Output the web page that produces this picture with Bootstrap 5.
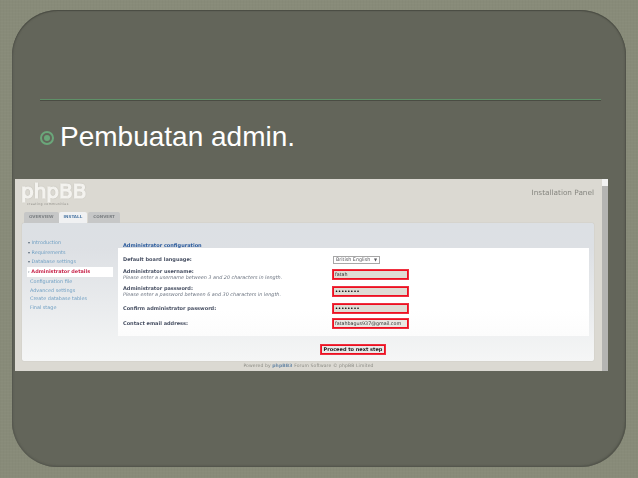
<!DOCTYPE html>
<html lang="id">
<head>
<meta charset="utf-8">
<title>Pembuatan admin</title>
<link href="https://cdn.jsdelivr.net/npm/bootstrap@5.3.0/dist/css/bootstrap.min.css" rel="stylesheet">
<script src="https://cdn.jsdelivr.net/npm/bootstrap@5.3.0/dist/js/bootstrap.bundle.min.js"></script>
<style>
html,body{margin:0;width:638px;height:478px;overflow:hidden}
.slide-bg{width:638px;height:478px;padding:10px 12px 11px 12px;background-color:#888b79;background-image:repeating-linear-gradient(0deg,rgba(255,255,255,.015) 0 1px,transparent 1px 3px),repeating-linear-gradient(90deg,rgba(0,0,0,.015) 0 1px,transparent 1px 3px)}
.slide-panel{height:457px;border-radius:46px;background:#63655a;box-shadow:inset 0 1px 1px #4a4c43,inset 1px 0 2px #565850,inset -1px -1px 2px #505249;padding-top:89px;overflow:hidden}
.rule-line{height:1px;margin:0 25px 0 28px;background:#5f9068;box-shadow:0 1px 0 #4a4c43}
.title-row{margin:19px 0 0 28px;height:36px;gap:6px}
.ring-dot{width:14px;height:14px;border-radius:50%;border:2px solid #6aa77a;padding:2px;margin-top:1px}
.ring-dot i{display:block;width:6px;height:6px;border-radius:50%;background:#6aa77a}
.title-text{font:28px/36px "Liberation Sans",sans-serif;color:#fff}
.shot{margin:24px 0 0 3px;width:593px;height:192px;background:#dbd9d2;font-family:"DejaVu Sans",sans-serif;filter:blur(.35px)}
.shot-main{width:587px}
.shot-head{height:33px;padding:2px 8px 0 6px}
.logo-box{line-height:1}
.logo-word{font:400 20px/20px "DejaVu Sans",sans-serif;color:#f4f3ef;-webkit-text-stroke:1.2px #f4f3ef;text-shadow:0 0 1.5px #85847c}
.logo-sub{font-size:3.2px;line-height:4px;color:#8f8e88;padding:1px 0 0 6px;letter-spacing:.35px}
.panel-name{font-size:7.3px;color:#85857f;margin-top:7px}
.tab-row{margin-left:9px;height:11px;gap:0}
.tab-item{font-size:4.1px;line-height:10px;font-weight:700;padding:0 5px;background:#c6c7c7;color:#7b7f82;border-radius:2px 2px 0 0}
.tab-item.on{background:#f0f1f2;color:#4f7aa6;height:11px;position:relative;z-index:1;margin-right:1px}
.inner-panel{margin-left:7px;width:572px;height:138px;background:linear-gradient(#dce0e4,#dde0e4 18%,#f5f6f6);border-radius:2px;box-shadow:0 0 1px #a9a9a3}
.side-col{width:96px;padding:15px 5px 0 5px}
.side-item{font-size:4.9px;line-height:8.7px;color:#6f9fc3;padding-left:1px;white-space:nowrap}
.side-item.on{background:#fff;color:#c8264c;font-weight:700;padding-left:1px}
.side-sub{padding-left:3px}
.side-mark{font-size:4px;color:#5d6e7e}
.main-col{width:471px;padding-top:19px}
.conf-title{font-size:5px;line-height:6px;font-weight:700;color:#2a5a9c;margin:0 0 0 5px}
.conf-card{height:88px;background:linear-gradient(#fff 70%,#fcfcfc);padding:5px 0 0 5px}
.form-line{display:grid;grid-template-columns:210px 1fr;align-items:center}
.line-a{height:13px}.line-b{height:17px}.line-c{height:13px}
.lab{font-size:5px;line-height:5.8px;font-weight:700;color:#474f62;white-space:nowrap}
.hint{font-size:4.9px;line-height:4.6px;font-style:italic;font-weight:400;color:#6c7480;white-space:nowrap}
.pick{width:47px;height:8px;border:1px solid #a7a7a7;background:#fff;font-size:4.8px;line-height:6px;color:#55555a;padding:0 2px}
.pick-arrow{font-size:4px}
.field{width:75px;height:9px;border:1px solid #ee1020;outline:.5px solid #ee3040;background:#dfdcd4;font-size:4.8px;line-height:7px;color:#333;padding-left:1px}
.field.blank{background:#e9e7e2}
.dots{font-weight:700;color:#111}
.go-row{padding:9px 0 0 0;line-height:9px}
.go-btn{font-size:5px;line-height:7px;font-weight:700;color:#222;border:1px solid #ee1020;outline:.5px solid #ee3040;padding:0 1.5px;background:#e9e9e9;margin-left:-1px}
.foot-line{font-size:4.5px;line-height:10px;color:#8c8c85;text-align:center;letter-spacing:.12px}
.foot-line b{color:#6d8ba8}
.scroll-col{width:6px;background:#b4b4b2}
.scroll-cap{height:7px;background:#f2f2f2}
</style>
</head>
<body>
<div class="slide-bg">
  <div class="slide-panel">
    <div class="rule-line"></div>
    <div class="title-row d-flex align-items-center">
      <span class="ring-dot"><i></i></span>
      <span class="title-text">Pembuatan admin.</span>
    </div>
    <div class="shot d-flex">
      <div class="shot-main">
        <div class="shot-head d-flex justify-content-between">
          <div class="logo-box">
            <div class="logo-word">phpBB</div>
            <div class="logo-sub">creating communities</div>
          </div>
          <div class="panel-name">Installation Panel</div>
        </div>
        <div class="tab-row d-flex">
          <div class="tab-item">OVERVIEW</div>
          <div class="tab-item on">INSTALL</div>
          <div class="tab-item">CONVERT</div>
        </div>
        <div class="inner-panel d-flex">
          <div class="side-col">
            <div class="side-item"><span class="side-mark">▾</span> Introduction</div>
            <div class="side-item"><span class="side-mark">▾</span> Requirements</div>
            <div class="side-item"><span class="side-mark">▾</span> Database settings</div>
            <div class="side-item on"><span class="side-mark">›</span> Administrator details</div>
            <div class="side-item side-sub">Configuration file</div>
            <div class="side-item side-sub">Advanced settings</div>
            <div class="side-item side-sub">Create database tables</div>
            <div class="side-item side-sub">Final stage</div>
          </div>
          <div class="main-col">
            <div class="conf-title">Administrator configuration</div>
            <div class="conf-card">
              <div class="form-line line-a"><div class="lab">Default board language:</div><div class="pick d-flex justify-content-between"><span>British English</span><span class="pick-arrow">▼</span></div></div>
              <div class="form-line line-b"><div class="lab">Administrator username:<div class="hint">Please enter a username between 3 and 20 characters in length.</div></div><div class="field">fatah</div></div>
              <div class="form-line line-b"><div class="lab">Administrator password:<div class="hint">Please enter a password between 6 and 30 characters in length.</div></div><div class="field dots">••••••••</div></div>
              <div class="form-line line-b"><div class="lab">Confirm administrator password:</div><div class="field dots">••••••••</div></div>
              <div class="form-line line-c"><div class="lab">Contact email address:</div><div class="field blank">fatahbagus937@gmail.com</div></div>
            </div>
            <div class="go-row d-flex justify-content-center"><span class="go-btn">Proceed to next step</span></div>
          </div>
        </div>
        <div class="foot-line">Powered by <b>phpBB3</b> Forum Software © phpBB Limited</div>
      </div>
      <div class="scroll-col"><div class="scroll-cap"></div></div>
    </div>
  </div>
</div>
</body>
</html>
